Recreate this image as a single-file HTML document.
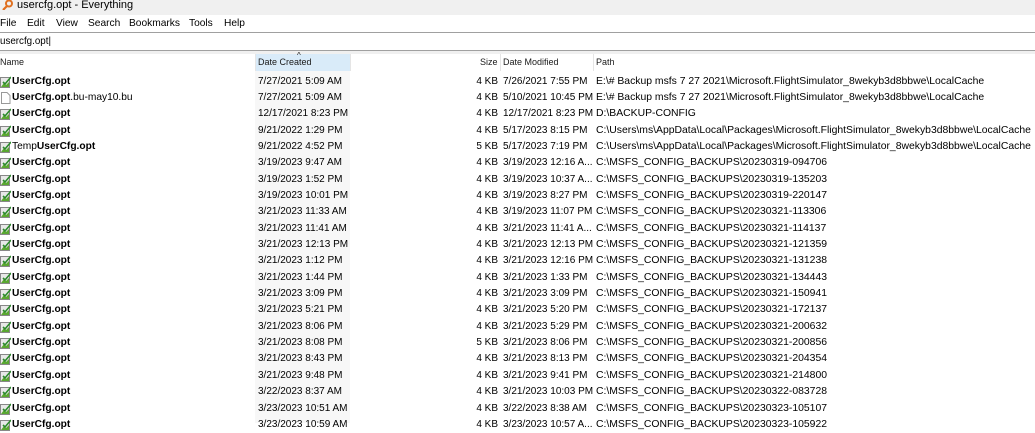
<!DOCTYPE html>
<html><head><meta charset="utf-8"><style>
*{margin:0;padding:0;box-sizing:border-box}
body{width:1035px;height:423px;overflow:hidden;background:#fff;font-family:"Liberation Sans",sans-serif;font-size:10px;color:#000;position:relative}
.title{position:absolute;left:0;top:0;width:1035px;height:15px;background:#f0f0f0;font-size:11px;line-height:10px}
.title span{position:absolute;left:17px;top:0}
.menu{position:absolute;top:15px;left:0;width:1035px;height:17px;line-height:17px;font-size:10.2px}
.menu span{position:absolute;top:0}
.search{position:absolute;top:32px;left:0;width:1035px;height:19px;border-top:1px solid #a0a0a0;border-bottom:1px solid #a0a0a0;line-height:17px;font-size:9.8px}
.gap{position:absolute;top:51px;left:0;width:1035px;height:3px;background:#f0f0f0}
.hdr{position:absolute;top:54px;left:0;width:1035px;height:17px;font-size:9px;line-height:17px;color:#1a1a1a}
.hdr span{position:absolute;top:0}
.sortcol{position:absolute;left:255px;top:54px;width:95px;height:17px;background:#d9ebf9}
.sortbg{position:absolute;left:255px;top:71px;width:95px;height:352px;background:#f7f7f7}
.sep{position:absolute;top:54px;width:1px;height:17px;background:#e5e5e5}
.row{position:absolute;left:0;width:1035px;height:16px;line-height:16px;white-space:nowrap}
.row span{position:absolute;top:0}
.n{left:12px;font-weight:bold;font-size:10.2px}
.n i{font-style:normal;font-weight:normal}
.dc{left:258px}
.sz{left:460px;width:38px;text-align:right}
.dm{left:503px}
.p{left:596px;font-size:10.4px}
.ic{position:absolute;left:0;top:2px;width:11px;height:12px}
</style></head><body>
<div class="title"><svg style="position:absolute;left:2px;top:0" width="12" height="10"><circle cx="7" cy="3.5" r="3" fill="none" stroke="#e07020" stroke-width="2"/><line x1="5" y1="6" x2="1" y2="10" stroke="#e07020" stroke-width="2.2"/></svg><span>usercfg.opt - Everything</span></div>
<div class="menu"><span style="left:0">File</span><span style="left:27px">Edit</span><span style="left:56px">View</span><span style="left:88px">Search</span><span style="left:129px">Bookmarks</span><span style="left:189px">Tools</span><span style="left:224px">Help</span></div>
<div class="search">usercfg.opt|</div>
<div class="gap"></div>
<div class="sortcol"></div>
<div class="sortbg"></div>
<div class="hdr"><span style="left:0">Name</span><span style="left:258px">Date Created</span><span style="left:297px;top:-7px;font-size:8px">^</span><span style="left:480px">Size</span><span style="left:503px">Date Modified</span><span style="left:596px">Path</span></div>
<div class="sep" style="left:255px"></div><div class="sep" style="left:350px"></div><div class="sep" style="left:500px"></div><div class="sep" style="left:593px"></div>
<div id="rows">
<div class="row" style="top:73.5px"><svg class="ic"><rect x="0.5" y="1.5" width="9" height="10" fill="#e8e8e8" stroke="#888"/><path d="M1 11 L4 7 L6 9 L9 6 L9 11Z" fill="#5aa830"/><path d="M3 6 L5 8 L11 1" stroke="#2c8a2c" stroke-width="1.6" fill="none"/></svg><span class="n">UserCfg.opt</span><span class="dc">7/27/2021 5:09 AM</span><span class="sz">4 KB</span><span class="dm">7/26/2021 7:55 PM</span><span class="p">E:\# Backup msfs 7 27 2021\Microsoft.FlightSimulator_8wekyb3d8bbwe\LocalCache</span></div>
<div class="row" style="top:89.9px"><svg class="ic"><path d="M1.5 0.5 H7 L10 3.5 V11.5 H1.5Z" fill="#fff" stroke="#999"/></svg><span class="n">UserCfg.opt<i>.bu-may10.bu</i></span><span class="dc">7/27/2021 5:09 AM</span><span class="sz">4 KB</span><span class="dm">5/10/2021 10:45 PM</span><span class="p">E:\# Backup msfs 7 27 2021\Microsoft.FlightSimulator_8wekyb3d8bbwe\LocalCache</span></div>
</div>
<script>
var d=[
["UserCfg.opt","12/17/2021 8:23 PM","4 KB","12/17/2021 8:23 PM","D:\\BACKUP-CONFIG"],
["UserCfg.opt","9/21/2022 1:29 PM","4 KB","5/17/2023 8:15 PM","C:\\Users\\ms\\AppData\\Local\\Packages\\Microsoft.FlightSimulator_8wekyb3d8bbwe\\LocalCache"],
["<i>Temp</i>UserCfg.opt","9/21/2022 4:52 PM","5 KB","5/17/2023 7:19 PM","C:\\Users\\ms\\AppData\\Local\\Packages\\Microsoft.FlightSimulator_8wekyb3d8bbwe\\LocalCache"],
["UserCfg.opt","3/19/2023 9:47 AM","4 KB","3/19/2023 12:16 A...","C:\\MSFS_CONFIG_BACKUPS\\20230319-094706"],
["UserCfg.opt","3/19/2023 1:52 PM","4 KB","3/19/2023 10:37 A...","C:\\MSFS_CONFIG_BACKUPS\\20230319-135203"],
["UserCfg.opt","3/19/2023 10:01 PM","4 KB","3/19/2023 8:27 PM","C:\\MSFS_CONFIG_BACKUPS\\20230319-220147"],
["UserCfg.opt","3/21/2023 11:33 AM","4 KB","3/19/2023 11:07 PM","C:\\MSFS_CONFIG_BACKUPS\\20230321-113306"],
["UserCfg.opt","3/21/2023 11:41 AM","4 KB","3/21/2023 11:41 A...","C:\\MSFS_CONFIG_BACKUPS\\20230321-114137"],
["UserCfg.opt","3/21/2023 12:13 PM","4 KB","3/21/2023 12:13 PM","C:\\MSFS_CONFIG_BACKUPS\\20230321-121359"],
["UserCfg.opt","3/21/2023 1:12 PM","4 KB","3/21/2023 12:16 PM","C:\\MSFS_CONFIG_BACKUPS\\20230321-131238"],
["UserCfg.opt","3/21/2023 1:44 PM","4 KB","3/21/2023 1:33 PM","C:\\MSFS_CONFIG_BACKUPS\\20230321-134443"],
["UserCfg.opt","3/21/2023 3:09 PM","4 KB","3/21/2023 3:09 PM","C:\\MSFS_CONFIG_BACKUPS\\20230321-150941"],
["UserCfg.opt","3/21/2023 5:21 PM","4 KB","3/21/2023 5:20 PM","C:\\MSFS_CONFIG_BACKUPS\\20230321-172137"],
["UserCfg.opt","3/21/2023 8:06 PM","4 KB","3/21/2023 5:29 PM","C:\\MSFS_CONFIG_BACKUPS\\20230321-200632"],
["UserCfg.opt","3/21/2023 8:08 PM","5 KB","3/21/2023 8:06 PM","C:\\MSFS_CONFIG_BACKUPS\\20230321-200856"],
["UserCfg.opt","3/21/2023 8:43 PM","4 KB","3/21/2023 8:13 PM","C:\\MSFS_CONFIG_BACKUPS\\20230321-204354"],
["UserCfg.opt","3/21/2023 9:48 PM","4 KB","3/21/2023 9:41 PM","C:\\MSFS_CONFIG_BACKUPS\\20230321-214800"],
["UserCfg.opt","3/22/2023 8:37 AM","4 KB","3/21/2023 10:03 PM","C:\\MSFS_CONFIG_BACKUPS\\20230322-083728"],
["UserCfg.opt","3/23/2023 10:51 AM","4 KB","3/22/2023 8:38 AM","C:\\MSFS_CONFIG_BACKUPS\\20230323-105107"],
["UserCfg.opt","3/23/2023 10:59 AM","4 KB","3/23/2023 10:57 A...","C:\\MSFS_CONFIG_BACKUPS\\20230323-105922"]];
var ic='<svg class="ic"><rect x="0.5" y="1.5" width="9" height="10" fill="#e8e8e8" stroke="#888"/><path d="M1 11 L4 7 L6 9 L9 6 L9 11Z" fill="#5aa830"/><path d="M3 6 L5 8 L11 1" stroke="#2c8a2c" stroke-width="1.6" fill="none"/></svg>';
var h='';
for(var i=0;i<d.length;i++){var t=73.5+(i+2)*16.35;
h+='<div class="row" style="top:'+t+'px">'+ic+'<span class="n">'+d[i][0]+'</span><span class="dc">'+d[i][1]+'</span><span class="sz">'+d[i][2]+'</span><span class="dm">'+d[i][3]+'</span><span class="p">'+d[i][4]+'</span></div>';}
document.getElementById('rows').insertAdjacentHTML('beforeend',h);
</script>
</body></html>
